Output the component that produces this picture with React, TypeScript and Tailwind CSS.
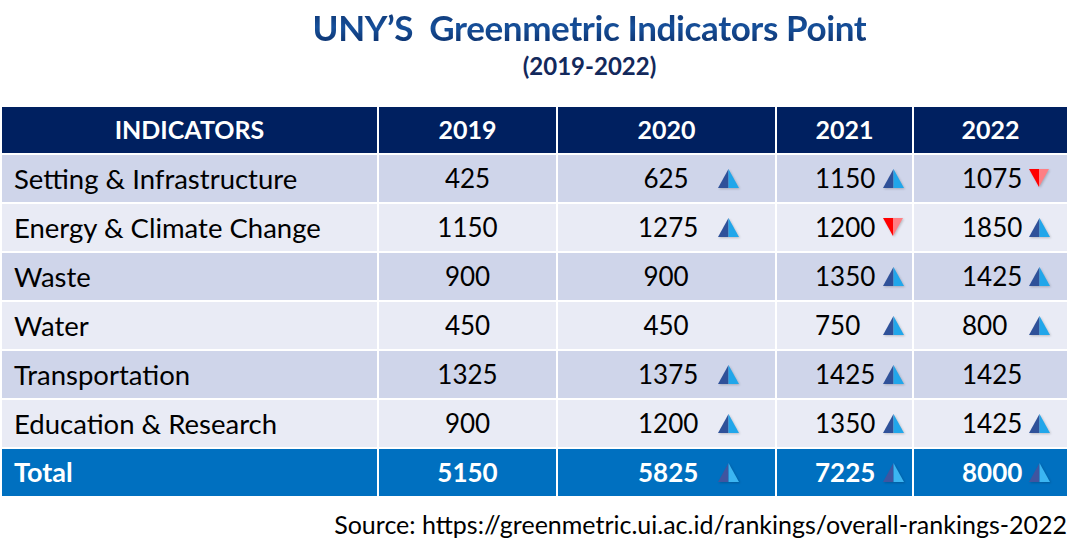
import React from 'react';

type Trend = 'up' | 'down' | null;
type Cell = { v: string; t?: Trend };

const rows: { name: string; cells: Cell[] }[] = [
  { name: 'Setting & Infrastructure', cells: [{ v: '425' }, { v: '625', t: 'up' }, { v: '1150', t: 'up' }, { v: '1075', t: 'down' }] },
  { name: 'Energy & Climate Change', cells: [{ v: '1150' }, { v: '1275', t: 'up' }, { v: '1200', t: 'down' }, { v: '1850', t: 'up' }] },
  { name: 'Waste', cells: [{ v: '900' }, { v: '900' }, { v: '1350', t: 'up' }, { v: '1425', t: 'up' }] },
  { name: 'Water', cells: [{ v: '450' }, { v: '450' }, { v: '750', t: 'up' }, { v: '800', t: 'up' }] },
  { name: 'Transportation', cells: [{ v: '1325' }, { v: '1375', t: 'up' }, { v: '1425', t: 'up' }, { v: '1425' }] },
  { name: 'Education & Research', cells: [{ v: '900' }, { v: '1200', t: 'up' }, { v: '1350', t: 'up' }, { v: '1425', t: 'up' }] },
];

const total: Cell[] = [{ v: '5150' }, { v: '5825', t: 'up' }, { v: '7225', t: 'up' }, { v: '8000', t: 'up' }];

const font = { fontFamily: 'Lato, "Open Sans", sans-serif' };

const Arrow = ({ t, dim }: { t: Trend; dim?: boolean }) => {
  if (!t) return <span className="w-[21px]" />;
  if (t === 'down')
    return (
      <svg width="20" height="19" viewBox="0 0 20 19" className="drop-shadow-[1px_1px_1px_rgba(0,0,0,0.2)]">
        <polygon points="0,0 10,0 10,18" fill="#ff0000" />
        <polygon points="10,0 20,0 10,18" fill="#ff7f84" />
      </svg>
    );
  return (
    <svg width="21" height="20" viewBox="0 0 21 20" className="drop-shadow-[1px_1px_1px_rgba(0,0,0,0.2)]">
      <polygon points="10.5,0 0,19 10.5,19" fill={dim ? '#3f55a0' : '#2f5199'} />
      <polygon points="10.5,0 10.5,19 21,19" fill={dim ? '#3bb5f2' : '#21a6ea'} />
    </svg>
  );
};

const ValueCells = ({ cells, bg, bold }: { cells: Cell[]; bg: string; bold?: boolean }) => {
  const txt = bold ? 'font-bold text-white' : 'text-black';
  return (
    <>
      <div className={`${bg} ${txt} flex items-center justify-center`}>{cells[0].v}</div>
      <div className={`${bg} ${txt} flex items-center pl-[80px]`}>
        <span className="w-[56px] text-center">{cells[1].v}</span>
        <span className="ml-[24px] flex items-center">
          <Arrow t={cells[1].t ?? null} dim={bold} />
        </span>
      </div>
      <div className={`${bg} ${txt} flex items-center pl-[38px]`}>
        <span className="w-[68px]">{cells[2].v}</span>
        <Arrow t={cells[2].t ?? null} dim={bold} />
      </div>
      <div className={`${bg} ${txt} flex items-center pl-[48px]`}>
        <span className="w-[67px]">{cells[3].v}</span>
        <Arrow t={cells[3].t ?? null} dim={bold} />
      </div>
    </>
  );
};

export default function App() {
  return (
    <div className="w-[1085px] h-[557px] bg-white overflow-hidden" style={font}>
      <div className="flex flex-col items-center pl-[94px] pt-[6px] h-[107px]">
        <h1
          className="text-[35px] font-bold leading-[42px] tracking-[-0.4px] bg-gradient-to-b from-[#0a2c66] via-[#17519c] to-[#0a2a62] bg-clip-text text-transparent whitespace-pre"
        >
          {'UNY’S  Greenmetric Indicators Point'}
        </h1>
        <div className="text-[24px] font-bold leading-[32px] text-[#13295c] mt-[2px]">(2019-2022)</div>
      </div>

      <div className="ml-[2px] w-[1065px] grid grid-cols-[375px_177px_217px_135px_153px] grid-rows-[46px_repeat(7,47px)] gap-[2px] text-[26px]">
        <div className="bg-[#002060] text-white font-bold text-[25px] flex items-center justify-center">INDICATORS</div>
        {['2019', '2020', '2021', '2022'].map((y) => (
          <div key={y} className="bg-[#002060] text-white font-bold text-[25px] flex items-center justify-center">
            {y}
          </div>
        ))}
        {rows.map((r, i) => {
          const bg = i % 2 === 0 ? 'bg-[#cfd5ea]' : 'bg-[#e9ebf5]';
          return (
            <React.Fragment key={r.name}>
              <div className={`${bg} text-black text-[27.5px] flex items-center pl-[12px]`}>{r.name}</div>
              <ValueCells cells={r.cells} bg={bg} />
            </React.Fragment>
          );
        })}
        <div className="bg-[#0070c0] text-white font-bold text-[27px] flex items-center pl-[12px]">Total</div>
        <ValueCells cells={total} bg="bg-[#0070c0]" bold />
      </div>

      <div className="w-[1067px] text-right text-[25px] text-black mt-[10px] leading-[36px]">
        Source: https://greenmetric.ui.ac.id/rankings/overall-rankings-2022
      </div>
    </div>
  );
}
